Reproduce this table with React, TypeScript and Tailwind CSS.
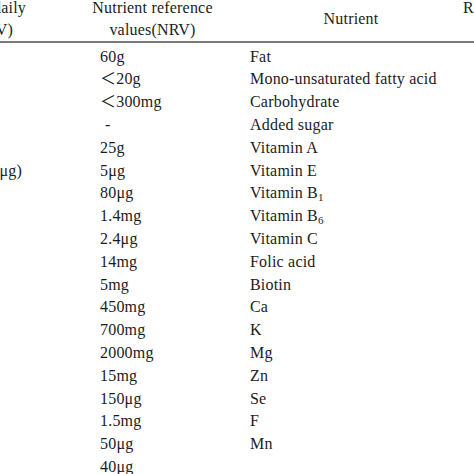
import type { ReactNode } from "react";

type Row = {
  side?: string;
  value: ReactNode;
  nutrient?: ReactNode;
};

const rows: Row[] = [
  { value: "60g", nutrient: "Fat" },
  { value: "＜20g", nutrient: "Mono-unsaturated fatty acid" },
  { value: "＜300mg", nutrient: "Carbohydrate" },
  { value: <span className="ml-[5px]">-</span>, nutrient: "Added sugar" },
  { value: "25g", nutrient: "Vitamin A" },
  { side: "Vitamin D (μg)", value: "5μg", nutrient: "Vitamin E" },
  {
    value: "80μg",
    nutrient: (
      <>
        Vitamin B<sub className="text-[11px]">1</sub>
      </>
    ),
  },
  {
    value: "1.4mg",
    nutrient: (
      <>
        Vitamin B<sub className="text-[11px]">6</sub>
      </>
    ),
  },
  { value: "2.4μg", nutrient: "Vitamin C" },
  { value: "14mg", nutrient: "Folic acid" },
  { value: "5mg", nutrient: "Biotin" },
  { value: "450mg", nutrient: "Ca" },
  { value: "700mg", nutrient: "K" },
  { value: "2000mg", nutrient: "Mg" },
  { value: "15mg", nutrient: "Zn" },
  { value: "150μg", nutrient: "Se" },
  { value: "1.5mg", nutrient: "F" },
  { value: "50μg", nutrient: "Mn" },
  { value: "40μg" },
];

const cols = "grid grid-cols-[160px_185px_212px_200px]";

export default function App() {
  return (
    <div
      className="w-[474px] h-[474px] overflow-hidden bg-white text-[16px] tracking-[0.2px] text-[#1c1c1c]"
      style={{ fontFamily: '"Liberation Serif", "Noto Sans CJK SC", serif' }}
    >
      <div className="ml-[-100px] mt-[-3px] w-[757px]">
        {/* header */}
        <div className={`${cols} h-[44px] leading-[22px]`}>
          <div className="flex flex-col">
            <div className="flex justify-end whitespace-nowrap pr-[34px]">
              Chinese daily
            </div>
            <div className="flex justify-end whitespace-nowrap pr-[47px]">
              intake(NRV)
            </div>
          </div>
          <div className="flex flex-col items-center whitespace-nowrap">
            <span>Nutrient reference</span>
            <span>values(NRV)</span>
          </div>
          <div className="flex items-center justify-center">Nutrient</div>
          <div className="whitespace-nowrap pl-[6px]">Recommended</div>
        </div>

        <div className="h-[2px] bg-[#7a7a7a]" />

        {/* body */}
        <div className="pt-[2.6px]">
          {rows.map((r, i) => (
            <div key={i} className={`${cols} h-[22.8px] leading-[22.8px]`}>
              <div className="flex justify-end whitespace-nowrap pr-[38px]">
                {r.side ?? ""}
              </div>
              <div className="whitespace-nowrap pl-[40px]">{r.value}</div>
              <div className="whitespace-nowrap pl-[5px]">{r.nutrient}</div>
              <div />
            </div>
          ))}
        </div>
      </div>
    </div>
  );
}
